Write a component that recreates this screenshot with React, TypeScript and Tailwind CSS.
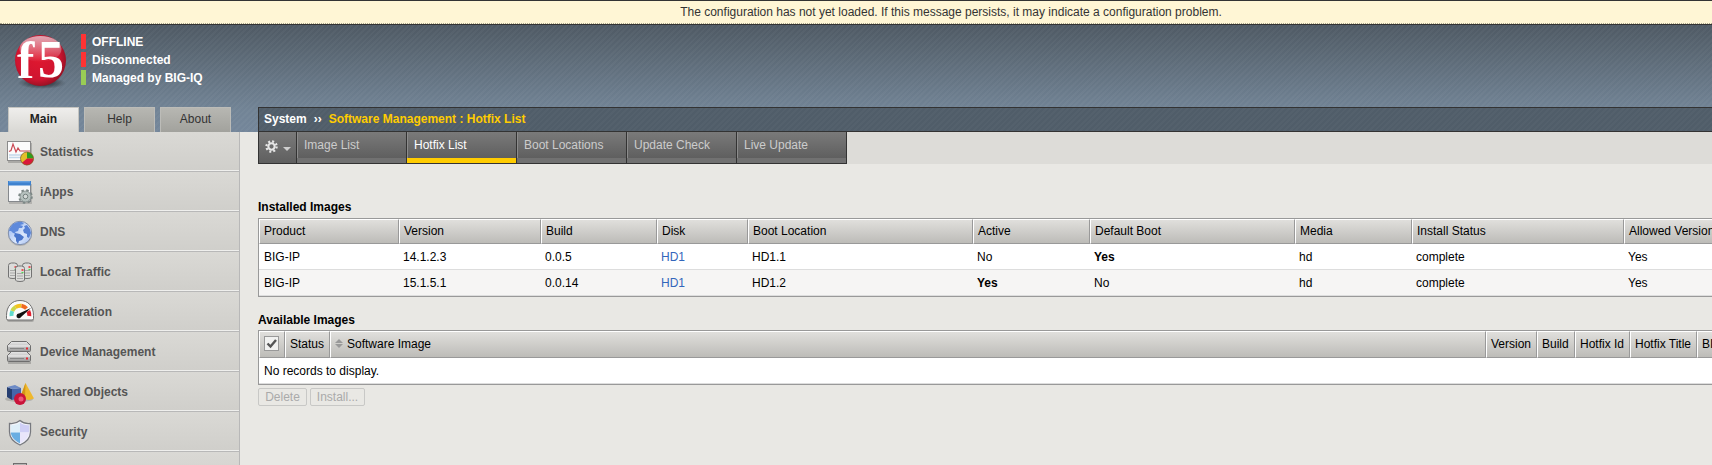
import type { ReactNode } from "react";
import { clsx } from "clsx";

const sidebarTabs = ["Main", "Help", "About"];
const moduleTabs = ["Image List", "Hotfix List", "Boot Locations", "Update Check", "Live Update"];

const installed = [
  { version: "14.1.2.3", build: "0.0.5", disk: "HD1", location: "HD1.1", active: "No", boot: "Yes" },
  { version: "15.1.5.1", build: "0.0.14", disk: "HD1", location: "HD1.2", active: "Yes", boot: "No" },
];

function Icon({ children }: { children: ReactNode }) {
  return (
    <svg viewBox="0 0 30 28" className="h-7 w-[30px] shrink-0 overflow-visible" aria-hidden="true">
      {children}
    </svg>
  );
}

function StatisticsIcon() {
  return (
    <Icon>
      <rect x="2" y="5" width="24" height="20" fill="#00000030" />
      <rect x="1.5" y="3.5" width="23" height="19" fill="#fbfbfb" stroke="#8b8b8b" />
      <path d="M3 17h21M3 19.5h21" stroke="#c3d8ea" strokeWidth="1.6" />
      <path d="M3 13.5l2-1L7 6l3 8 2-4 2 3h10" fill="none" stroke="#cb4a55" strokeWidth="1.2" />
      <circle cx="21" cy="20.5" r="6.5" fill="#e3bf2a" />
      <path d="M21 20.5V14a6.5 6.5 0 0 1 6.5 6.5z" fill="#2f9e1f" />
      <path d="M21 20.5h6.5a6.5 6.5 0 0 1-11.5 4.2z" fill="#d9183a" />
      <circle cx="21" cy="20.5" r="6.5" fill="none" stroke="#7b5a20" strokeWidth=".7" />
    </Icon>
  );
}

function AppsIcon() {
  return (
    <Icon>
      <rect x="3" y="6" width="23" height="20" fill="#00000025" />
      <rect x="2.5" y="3.5" width="22" height="20" fill="#f7f8fa" stroke="#85888c" />
      <rect x="2" y="3" width="23" height="4.5" fill="#3e82cf" />
      <path d="M3 3.8h21" stroke="#78b0ea" />
      <circle cx="19.5" cy="18.500" r="6" fill="none" stroke="#7d8886" strokeWidth="2.600" strokeDasharray="2.360 2.350" />
      <circle cx="19.5" cy="18.500" r="5.5" fill="#b5c0bd" stroke="#7d8886" strokeWidth=".8" />
      <circle cx="19.5" cy="18.500" r="2.3" fill="#d5dad8" stroke="#74807e" />
    </Icon>
  );
}

function DnsIcon() {
  return (
    <Icon>
      <defs>
        <linearGradient id="globe" x1="0" y1="0" x2="1" y2="1">
          <stop offset="0" stopColor="#8fb0ee" />
          <stop offset=".6" stopColor="#dce8fc" />
          <stop offset="1" stopColor="#9fbaf0" />
        </linearGradient>
      </defs>
      <circle cx="14" cy="16" r="12" fill="#00000025" />
      <circle cx="14" cy="15" r="11.7" fill="url(#globe)" stroke="#7f8eab" />
      <path d="M4 10l3-4 5-2 4 0 2 2-4 1 3 1-1 2-3 0-1 3-3 1 1 2-3-1-2-2-2 0z" fill="#5f8adb" />
      <path d="M9 15l5 1 4 3-2 3-3 1-1 3-2-3 0-3-2-2z" fill="#4a76cc" />
      <path d="M18 8l3-1 3 4 1 4-2 5-2-1 0-3-3-1-1-3 2-2z" fill="#5580d4" />
    </Icon>
  );
}

function Server({ x, y }: { x: number; y: number }) {
  return (
    <g>
      <path
        d={`M${x} ${y + 3}q0-2.5 3-2.5h3q3 0 3 2.5v11.5q0 1.5-4.5 1.5t-4.5-1.5z`}
        fill="#dcdcda"
        stroke="#737373"
      />
      <path d={`M${x + 1.5} ${y + 8}h6M${x + 1.5} ${y + 10.5}h6M${x + 1.5} ${y + 13}h6`} stroke="#a9a9a9" />
      <path d={`M${x + 6} ${y + 4.5}h2`} stroke="#e33" strokeWidth="1.6" />
      <path d={`M${x + 6} ${y + 7}h2`} stroke="#55d455" strokeWidth="1.2" />
    </g>
  );
}

function LocalTrafficIcon() {
  return (
    <Icon>
      <Server x={2.5} y={4.5} />
      <Server x={16.5} y={4.5} />
      <Server x={9.5} y={7.5} />
    </Icon>
  );
}

function AccelerationIcon() {
  return (
    <Icon>
      <path d="M1 19C1 9 6 4 14 4s14 5 14 15v3q0 2-2 2H3q-2 0-2-2z" fill="#00000030" />
      <path d="M.5 17.500C.5 8 6 2.500 14 2.500s13.500 5.500 13.500 15v3q0 1.500-1.500 1.500H2Q.5 22 .5 20.500z" fill="#fafafa" stroke="#6f6f6f" />
      <g fill="none" strokeWidth="4">
        <path d="M5.500 18a9 9 0 0 1 .8-5" stroke="#5fd9cc" />
        <path d="M6.300 13a9 9 0 0 1 3.200-3.800" stroke="#c9d64a" />
        <path d="M9.500 9.200a9 9 0 0 1 6-1.400" stroke="#f2c21f" />
        <path d="M15.500 7.800a9 9 0 0 1 5 2.700" stroke="#ef6a22" />
        <path d="M22.300 13a9 9 0 0 1 1 5" stroke="#e0202e" />
      </g>
      <path d="M25 10L13 15.500a2.400 2.400 0 1 0 2 3.500z" fill="#111" />
    </Icon>
  );
}

function DeviceIcon() {
  return (
    <Icon>
      <defs>
        <linearGradient id="drive" x2="0" y2="1">
          <stop offset="0" stopColor="#e9e9e9" />
          <stop offset="1" stopColor="#9a9a9a" />
        </linearGradient>
      </defs>
      <path d="M2 25h23" stroke="#00000030" strokeWidth="2" />
      {[10, 0].map((y) => (
        <g key={y}>
          <path d={`M1.500 ${y + 7.500}l4-4h15l4 4v5q0 1-1 1h-21q-1 0-1-1z`} fill="url(#drive)" stroke="#6e6e6e" />
          <path d={`M2 ${y + 8}h22`} stroke="#f4f4f4" />
          <path d={`M4 ${y + 10.500}h14`} stroke="#868686" />
          <rect x="20" y={y + 9.500} width="2" height="2" fill="#e32b36" />
        </g>
      ))}
    </Icon>
  );
}

function SharedObjectsIcon() {
  return (
    <Icon>
      <ellipse cx="13" cy="21" rx="14" ry="3" fill="#00000028" />
      <path d="M1 9l5 2v11l-5-3z" fill="#263e70" />
      <path d="M6 11l9-1v10l-9 2z" fill="#4566ab" />
      <path d="M1 9l8-2 6 3-9 1z" fill="#6d8bc6" />
      <path d="M19.500 5L28 20.500l-5 1.500-9-2z" fill="#efb82c" />
      <path d="M19.500 5L14 20l5 1.500z" fill="#d29518" />
      <circle cx="14" cy="21" r="6" fill="#c9143a" />
      <circle cx="15" cy="21" r="2.500" fill="#ee5878" />
    </Icon>
  );
}

function SecurityIcon() {
  return (
    <Icon>
      <path d="M14 2.500C11 5 7 6 3.500 5.500V14c0 6 5 10.500 10.500 13 5.500-2.500 10.500-7 10.500-13V5.500C21 6 17 5 14 2.500z" fill="#f3f5fb" stroke="#77797f" strokeWidth="1.300" />
      <path d="M14 4.500c-2.500 2-6 3-9.200 2.700V14.500H14z" fill="#dfeffa" />
      <path d="M14 4.500c2.500 2 6 3 9.200 2.700V14.500H14z" fill="#cfcff6" />
      <path d="M14 14.500H4.800c.3 5 4.700 8.800 9.200 11z" fill="#6aaee2" />
      <path d="M14 14.500h9.200c-.3 5-4.700 8.800-9.200 11z" fill="#e9e6fb" />
    </Icon>
  );
}

function NetworkIcon() {
  return (
    <Icon>
      <rect x="7.500" y="5.500" width="13" height="11" fill="#b5b5b3" stroke="#6e6e6e" />
      <path d="M14 17v8M3 24.500h22" stroke="#6e6e6e" strokeWidth="2" />
    </Icon>
  );
}

const menu = [
  { label: "Statistics", icon: <StatisticsIcon /> },
  { label: "iApps", icon: <AppsIcon /> },
  { label: "DNS", icon: <DnsIcon /> },
  { label: "Local Traffic", icon: <LocalTrafficIcon /> },
  { label: "Acceleration", icon: <AccelerationIcon /> },
  { label: "Device Management", icon: <DeviceIcon /> },
  { label: "Shared Objects", icon: <SharedObjectsIcon /> },
  { label: "Security", icon: <SecurityIcon /> },
  { label: "Network", icon: <NetworkIcon /> },
];

function Logo() {
  return (
    <svg viewBox="0 0 56 56" className="size-14 overflow-visible" role="img" aria-label="f5">
      <defs>
        <radialGradient id="ball" cx=".45" cy=".45" r=".6">
          <stop offset="0" stopColor="#e0182f" />
          <stop offset=".7" stopColor="#cf1430" />
          <stop offset="1" stopColor="#8a1020" />
        </radialGradient>
        <linearGradient id="shine" x2="0" y2="1">
          <stop offset="0" stopColor="#e6d8de" stopOpacity=".75" />
          <stop offset="1" stopColor="#fff" stopOpacity="0" />
        </linearGradient>
        <radialGradient id="shade">
          <stop offset="0" stopColor="#000" stopOpacity=".7" />
          <stop offset="1" stopColor="#000" stopOpacity="0" />
        </radialGradient>
      </defs>
      <ellipse cx="29" cy="49" rx="24" ry="6" fill="url(#shade)" />
      <circle cx="27.500" cy="26.500" r="25.500" fill="url(#ball)" />
      <ellipse cx="27.500" cy="15" rx="21" ry="13" fill="url(#shine)" />
      <g fill="#fff" fontFamily="'Liberation Serif', serif" fontWeight="700" fontSize="52">
        <text x="4" y="44">f</text>
        <text x="25" y="43">5</text>
      </g>
    </svg>
  );
}

function GearMenu() {
  return (
    <button
      aria-label="Options"
      className="flex w-[38px] items-center justify-center gap-[5px] border-r border-[#333] bg-linear-to-b from-[#7a7a7a] to-[#5f5f5f] pb-0.5 pl-px"
    >
      <svg viewBox="0 0 14 14" className="size-[13px]" aria-hidden="true">
        <circle cx="7" cy="7" r="5.500" fill="none" stroke="#e6e6e6" strokeWidth="2.400" strokeDasharray="2.160 2.160" />
        <circle cx="7" cy="7" r="3.400" fill="none" stroke="#e6e6e6" strokeWidth="2.200" />
      </svg>
      <svg viewBox="0 0 8 4" className="mt-1 h-1 w-2" aria-hidden="true">
        <path d="M0 0h8L4 4z" fill="#cfcfcf" />
      </svg>
    </button>
  );
}

function Th({ children }: { children: ReactNode }) {
  return (
    <th className="overflow-hidden border-t border-r border-b border-l border-t-white border-r-[#999] border-b-[#999] border-l-white bg-linear-to-b from-[#e0dfdc] to-[#bdbcb8] px-1 pb-0.5 text-left font-normal whitespace-nowrap last:border-r-0">
      {children}
    </th>
  );
}

function Td({ children, bold }: { children: ReactNode; bold?: boolean }) {
  return <td className={clsx("border-b border-[#ddd] px-1 first:pl-[5px]", bold && "font-bold")}>{children}</td>;
}

const tableClass =
  "w-full table-fixed border-separate border-spacing-0 border border-r-0 border-[#999] bg-white";

export default function App() {
  return (
    <div className="h-screen overflow-hidden bg-[#e9e8e4] font-['Liberation_Sans',Arial,sans-serif] text-xs text-black">
      {/* The console is wider than the viewport and runs off to the right */}
      <div className="w-[calc(100%+190px)]">
        <div role="alert" className="border-y border-[#333]">
          <p className="border-b border-dotted border-[#aaa68c] bg-[#fff6d5] pt-[3px] pb-[3px] text-center leading-4 text-[#333]">
            The configuration has not yet loaded. If this message persists, it may indicate a configuration problem.
          </p>
        </div>

        <div className="bg-[repeating-linear-gradient(135deg,#ffffff08_0_2px,transparent_2px_4px),linear-gradient(#4f5a64,#728496_80%,#74869a)] bg-[length:100%_107px] bg-no-repeat">
          <header className="flex h-[82px] gap-3 pt-[9px] pl-[13px]">
            <Logo />
            <ul className="flex flex-col gap-[3px] font-bold text-white">
              <li className="flex h-[15px] items-center border-l-[5px] border-[#ff3333] pl-1.5">OFFLINE</li>
              <li className="flex h-[15px] items-center border-l-[5px] border-[#ff3333] pl-1.5">Disconnected</li>
              <li className="flex h-[15px] items-center border-l-[5px] border-[#99cc55] pl-1.5">Managed by BIG-IQ</li>
            </ul>
          </header>

          <div className="flex items-start">
            <aside className="w-60 shrink-0">
              <div className="flex gap-[5px] pl-2">
                {sidebarTabs.map((tab) => (
                  <button
                    key={tab}
                    className={clsx(
                      "h-[25px] w-[71px] border border-b-0 pb-0.5",
                      tab === "Main"
                        ? "border-[#c4c4c0] bg-linear-to-b from-[#efeeec] to-[#d9d8d4] font-bold text-[#222]"
                        : "border-[#bcbcb8] bg-linear-to-b from-[#b7b7b2] to-[#a2a29d] text-[#333]"
                    )}
                  >
                    {tab}
                  </button>
                ))}
              </div>
              <nav className="border-r border-[#b8b8b8]">
                {menu.map((item) => (
                  <a
                    key={item.label}
                    href="#"
                    className="flex h-10 items-center gap-1 border-t border-b border-t-[#b8b8b8] border-b-[#efefed] bg-linear-to-b from-[#dad9d5] to-[#d0cfcb] pt-0.5 pl-1.5 font-bold text-[#555] first:h-[39px] first:border-t-0"
                  >
                    {item.icon}
                    {item.label}
                  </a>
                ))}
              </nav>
            </aside>

            <main className="min-w-0 flex-1 pl-[18px]">
              <div className="flex h-[25px] items-center border-y border-l border-[#333] bg-[repeating-linear-gradient(135deg,#ffffff06_0_2px,transparent_2px_4px)] bg-[#505d69] pb-0.5 pl-[5px] font-bold text-white">
                System
                <span className="mx-[7px]">››</span>
                <span className="text-[#ffcc00]">Software Management : Hotfix List</span>
              </div>

              <nav className="flex h-8 bg-[#dddcd8]">
                <div className="flex border-b border-l border-[#333]">
                  <GearMenu />
                  {moduleTabs.map((tab) => (
                    <a
                      key={tab}
                      href="#"
                      className="flex w-[110px] flex-col border-r border-[#333]"
                    >
                      <span
                        className={clsx(
                          "h-[26px] border-l border-[#8c8c8c] bg-linear-to-b from-[#7a7a7a] to-[#5f5f5f] pl-1.5 leading-[26px]",
                          tab === "Hotfix List" ? "text-white" : "text-[#ccc]"
                        )}
                      >
                        {tab}
                      </span>
                      <span className={clsx("h-[5px]", tab === "Hotfix List" ? "bg-[#ffcc00]" : "bg-[#717171]")} />
                    </a>
                  ))}
                </div>
              </nav>

              <h2 className="mt-[35px] h-[19px] leading-4 font-bold">Installed Images</h2>
              <table className={tableClass}>
                <colgroup>
                  <col className="w-[140px]" />
                  <col className="w-[142px]" />
                  <col className="w-[116px]" />
                  <col className="w-[91px]" />
                  <col className="w-[225px]" />
                  <col className="w-[117px]" />
                  <col className="w-[205px]" />
                  <col className="w-[117px]" />
                  <col className="w-[212px]" />
                  <col />
                </colgroup>
                <thead>
                  <tr className="h-[25px]">
                    <Th>Product</Th>
                    <Th>Version</Th>
                    <Th>Build</Th>
                    <Th>Disk</Th>
                    <Th>Boot Location</Th>
                    <Th>Active</Th>
                    <Th>Default Boot</Th>
                    <Th>Media</Th>
                    <Th>Install Status</Th>
                    <Th>Allowed Version</Th>
                  </tr>
                </thead>
                <tbody>
                  {installed.map((row) => (
                    <tr key={row.version} className="h-[26px] even:bg-[#f6f5f4]">
                      <Td>BIG-IP</Td>
                      <Td>{row.version}</Td>
                      <Td>{row.build}</Td>
                      <Td>
                        <a href="#" className="text-[#3366bb]">
                          {row.disk}
                        </a>
                      </Td>
                      <Td>{row.location}</Td>
                      <Td bold={row.active === "Yes"}>{row.active}</Td>
                      <Td bold={row.boot === "Yes"}>{row.boot}</Td>
                      <Td>hd</Td>
                      <Td>complete</Td>
                      <Td>Yes</Td>
                    </tr>
                  ))}
                </tbody>
              </table>

              <h2 className="mt-[15px] h-[18px] leading-4 font-bold">Available Images</h2>
              <table className={tableClass}>
                <colgroup>
                  <col className="w-[26px]" />
                  <col className="w-[45px]" />
                  <col />
                  <col className="w-[51px]" />
                  <col className="w-[38px]" />
                  <col className="w-[55px]" />
                  <col className="w-[67px]" />
                  <col className="w-[205px]" />
                </colgroup>
                <thead>
                  <tr className="h-[27px]">
                    <Th>
                      <label className="relative block size-[15px]">
                        <input
                          type="checkbox"
                          defaultChecked
                          aria-label="Select all"
                          className="block size-[15px] appearance-none border border-[#999] bg-[#f1f1f0]"
                        />
                        <svg viewBox="0 0 15 15" className="absolute inset-0" aria-hidden="true">
                          <path d="M3.500 7.500l3 3 5.500-6.500" fill="none" stroke="#555" strokeWidth="2.400" />
                        </svg>
                      </label>
                    </Th>
                    <Th>Status</Th>
                    <Th>
                      <span className="flex items-center gap-1">
                        <svg viewBox="0 0 8 9" className="h-[9px] w-2" aria-hidden="true">
                          <path d="M0 4l4-4 4 4zM0 5h8L4 9z" fill="#999" />
                        </svg>
                        Software Image
                      </span>
                    </Th>
                    <Th>Version</Th>
                    <Th>Build</Th>
                    <Th>Hotfix Id</Th>
                    <Th>Hotfix Title</Th>
                    <Th>BIG-IP</Th>
                  </tr>
                </thead>
                <tbody>
                  <tr className="h-[26px]">
                    <td colSpan={8} className="border-b border-[#ddd] pl-[5px]">
                      No records to display.
                    </td>
                  </tr>
                </tbody>
              </table>

              <div className="mt-[3px] flex gap-[3px]">
                <button disabled className="h-[18px] w-[49px] rounded-xs border border-[#c8c8c6] text-[#aaa] leading-4">
                  Delete
                </button>
                <button disabled className="h-[18px] w-[55px] rounded-xs border border-[#c8c8c6] text-[#aaa] leading-4">
                  Install...
                </button>
              </div>
            </main>
          </div>
        </div>
      </div>
    </div>
  );
}
